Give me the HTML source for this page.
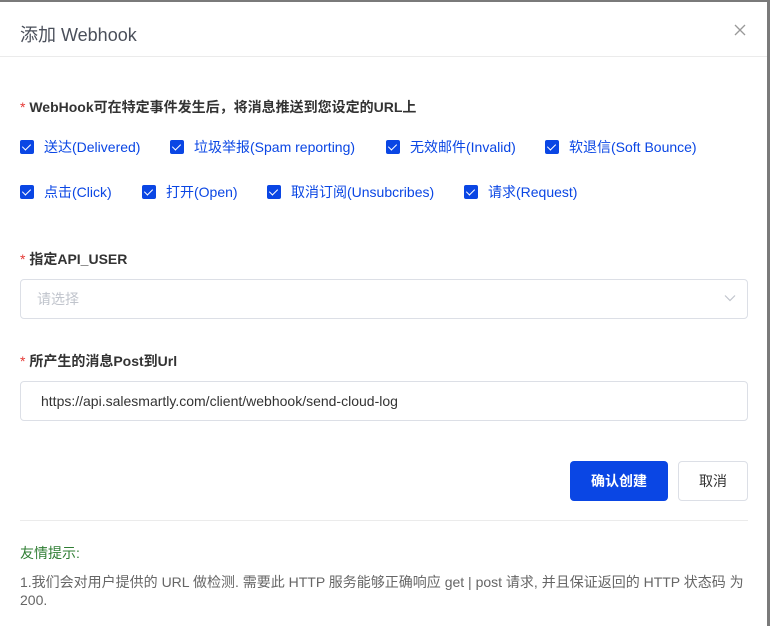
<!DOCTYPE html>
<html><head><meta charset="utf-8"><style>
*{box-sizing:border-box;margin:0;padding:0}
body{width:770px;height:626px;background:#7a7a7a;font-family:"Liberation Sans","Noto Sans CJK SC",sans-serif;overflow:hidden;position:relative}
.dlg{position:absolute;left:0;top:2px;width:767px;height:624px;background:#fff}
.t{position:absolute;left:20px;top:19px;font-size:18px;color:#4a4f5a}
.x{position:absolute;left:734px;top:22px}
.hr{position:absolute;left:0;top:54px;width:767px;height:1px;background:#ebebeb}
.lbl{position:absolute;left:20px;font-size:14px;font-weight:bold;color:#333}
.lbl span{color:#e53935;font-weight:normal}
.cb{position:absolute;font-size:14px;color:#0a46e4;display:flex;align-items:center}
.cb i{width:14px;height:14px;background:#0a46e4;border-radius:2px;margin-right:10px;position:relative}
.cb i:after{content:"";position:absolute;left:4px;top:2px;width:4px;height:7px;border:solid #fff;border-width:0 1.5px 1.5px 0;transform:rotate(45deg)}
.inp{position:absolute;left:20px;width:728px;height:40px;border:1px solid #dcdfe6;border-radius:4px;font-size:14px;padding-left:16px;line-height:38px}
.btn{position:absolute;top:459px;height:40px;border-radius:4px;font-size:14px;text-align:center;line-height:40px}
</style></head><body><div class="dlg">
<div class="t">添加 Webhook</div>
<svg class="x" width="12" height="12" viewBox="0 0 12 12"><path d="M1 1L11 11M11 1L1 11" stroke="#999" stroke-width="1.3"/></svg>
<div class="hr"></div>
<div class="lbl" style="top:95px"><span>* </span>WebHook可在特定事件发生后，将消息推送到您设定的URL上</div>
<div class="cb" style="left:20px;top:135px"><i></i>送达(Delivered)</div>
<div class="cb" style="left:170px;top:135px"><i></i>垃圾举报(Spam reporting)</div>
<div class="cb" style="left:386px;top:135px"><i></i>无效邮件(Invalid)</div>
<div class="cb" style="left:545px;top:135px"><i></i>软退信(Soft Bounce)</div>
<div class="cb" style="left:20px;top:180px"><i></i>点击(Click)</div>
<div class="cb" style="left:142px;top:180px"><i></i>打开(Open)</div>
<div class="cb" style="left:267px;top:180px"><i></i>取消订阅(Unsubcribes)</div>
<div class="cb" style="left:464px;top:180px"><i></i>请求(Request)</div>
<div class="lbl" style="top:247px"><span>* </span>指定API_USER</div>
<div class="inp" style="top:277px;color:#c0c4cc">请选择<svg style="position:absolute;right:11px;top:14px" width="12" height="8" viewBox="0 0 12 8"><path d="M1 1.5L6 6.5L11 1.5" fill="none" stroke="#c0c4cc" stroke-width="1.2"/></svg></div>
<div class="lbl" style="top:349px"><span>* </span>所产生的消息Post到Url</div>
<div class="inp" style="top:379px;color:#333;padding-left:20px">https://api.salesmartly.com/client/webhook/send-cloud-log</div>
<div class="btn" style="left:570px;width:98px;background:#0a46e4;color:#fff;font-weight:bold">确认创建</div>
<div class="btn" style="left:678px;width:70px;border:1px solid #dcdfe6;color:#333;line-height:38px">取消</div>
<div style="position:absolute;left:20px;top:518px;width:728px;height:1px;background:#ebebeb"></div>
<div style="position:absolute;left:20px;top:541px;font-size:14px;color:#2e7d32">友情提示:</div>
<div style="position:absolute;left:20px;top:571px;width:735px;font-size:14px;color:#666;line-height:18px">1.我们会对用户提供的 URL 做检测. 需要此 HTTP 服务能够正确响应 get | post 请求, 并且保证返回的 HTTP 状态码 为 200.</div>
</div></body></html>
